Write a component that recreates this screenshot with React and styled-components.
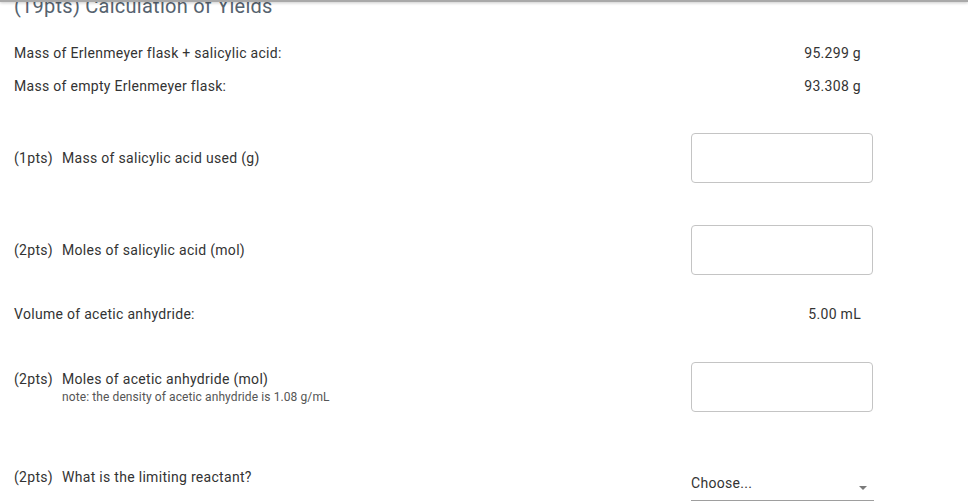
import React from 'react';
import styled, { createGlobalStyle } from 'styled-components';

const GlobalStyle = createGlobalStyle`
  html, body {
    margin: 0;
    padding: 0;
    background: #ffffff;
  }
  body {
    font-family: Roboto, "Liberation Sans", Arial, sans-serif;
    color: #333333;
    overflow: hidden;
  }
`;

const TopEdge = styled.div`
  position: fixed;
  top: 0;
  left: 0;
  right: 0;
  height: 2px;
  background: #a9a9a9;
  box-shadow: 0 1px 3px rgba(0, 0, 0, 0.25);
  z-index: 2;
`;

const Page = styled.div`
  padding: 0 14px;
`;

const Heading = styled.h2`
  margin: -6px 0 0;
  height: 24px;
  font-size: 20px;
  line-height: 24px;
  font-weight: 400;
  letter-spacing: 0.25px;
  color: #56636f;
`;

const Row = styled.div`
  display: grid;
  grid-template-columns: 677px 183px;
  align-items: center;
  margin-top: ${(p) => p.gap || 0}px;
  min-height: ${(p) => p.h || 20}px;
`;

const LabelCell = styled.div`
  display: flex;
  align-items: flex-start;
  font-size: 14px;
  line-height: 20px;
  letter-spacing: 0.3px;
  margin-bottom: ${(p) => p.lift || 0}px;
`;

const Pts = styled.span`
  flex: 0 0 48px;
`;

const LabelText = styled.div`
  display: flex;
  flex-direction: column;
`;

const Note = styled.span`
  font-size: 12px;
  line-height: 16px;
  letter-spacing: 0.1px;
  color: #555555;
`;

const Value = styled.div`
  text-align: right;
  padding-right: 13px;
  font-size: 14px;
  line-height: 20px;
  letter-spacing: 0.3px;
`;

const AnswerBox = styled.input`
  box-sizing: border-box;
  width: 182px;
  height: 50px;
  border: 1px solid #c4c4c4;
  border-radius: 4px;
  background: #fff;
  font-family: inherit;
  font-size: 14px;
  padding: 0 10px;
  outline: none;
`;

const SelectBox = styled.div`
  position: relative;
  box-sizing: border-box;
  width: 183px;
  height: 38px;
  display: flex;
  align-items: center;
  padding-top: 2px;
  border-bottom: 1px solid #9e9e9e;
  font-size: 14px;
  letter-spacing: 0.3px;
  color: #333;
`;

const Caret = styled.span`
  position: absolute;
  right: 7px;
  top: 23px;
  width: 0;
  height: 0;
  border-left: 4px solid transparent;
  border-right: 4px solid transparent;
  border-top: 4px solid #7a7a7a;
`;

function Label({ pts, text, note, lift }) {
  return (
    <LabelCell lift={lift}>
      {pts && <Pts>({pts}pts)</Pts>}
      <LabelText>
        <span>{text}</span>
        {note && <Note>{note}</Note>}
      </LabelText>
    </LabelCell>
  );
}

export default function App() {
  return (
    <>
      <GlobalStyle />
      <TopEdge />
      <Page>
        <Heading>(19pts) Calculation of Yields</Heading>

        <Row gap={18} h={33}>
          <Label text="Mass of Erlenmeyer flask + salicylic acid:" />
          <Value>95.299 g</Value>
        </Row>
        <Row h={33}>
          <Label text="Mass of empty Erlenmeyer flask:" />
          <Value>93.308 g</Value>
        </Row>

        <Row gap={31} h={50}>
          <Label pts={1} text="Mass of salicylic acid used (g)" />
          <AnswerBox />
        </Row>

        <Row gap={42} h={50}>
          <Label pts={2} text="Moles of salicylic acid (mol)" />
          <AnswerBox />
        </Row>

        <Row gap={29} h={20}>
          <Label text="Volume of acetic anhydride:" />
          <Value>5.00 mL</Value>
        </Row>

        <Row gap={38} h={50}>
          <Label
            pts={2}
            text="Moles of acetic anhydride (mol)"
            note="note: the density of acetic anhydride is 1.08 g/mL"
          />
          <AnswerBox />
        </Row>

        <Row gap={51} h={38}>
          <Label pts={2} text="What is the limiting reactant?" lift={10} />
          <SelectBox>
            Choose...
            <Caret />
          </SelectBox>
        </Row>
      </Page>
    </>
  );
}
